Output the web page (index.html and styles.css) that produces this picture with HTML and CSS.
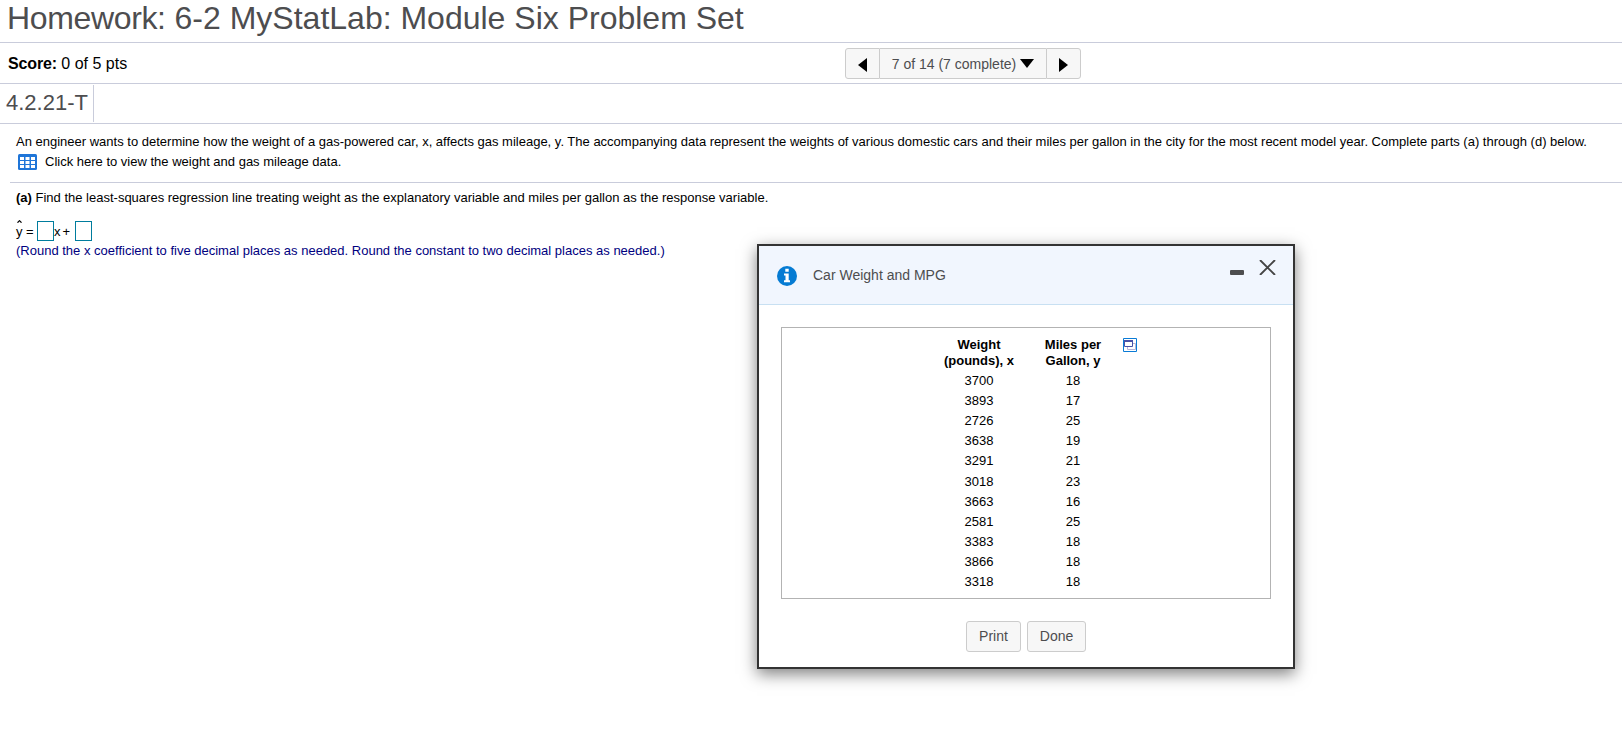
FILE: index.html
```html
<!DOCTYPE html>
<html lang="en">
  <head>
    <meta charset="UTF-8" />
    <meta name="viewport" content="width=device-width, initial-scale=1.0" />
    <title>Homework: 6-2 MyStatLab: Module Six Problem Set</title>
    <link rel="stylesheet" href="styles.css">
  </head>
  <body>
    <h1><span>Homework:</span> 6-2 MyStatLab: Module Six Problem Set</h1>
    <div class="score-bar">
      <div class="score"><b>Score:</b> 0 of 5 pts</div>
      <div class="pager">
        <button class="arrow">
          <svg width="9" height="14" viewBox="0 0 9 14"><path d="M9 0v14L0 7z" /></svg>
        </button>
        <button class="current">
          <span>7 of 14 (7 complete)</span>
          <svg width="14" height="9" viewBox="0 0 14 9"><path d="M0 0h14L7 9z" /></svg>
        </button>
        <button class="arrow">
          <svg width="9" height="14" viewBox="0 0 9 14"><path d="M0 0v14l9-7z" /></svg>
        </button>
      </div>
    </div>
    <div class="exercise-bar">
      <div class="exercise-id">4.2.21-T</div>
    </div>

    <div class="question">
      <p class="intro">An engineer wants to determine how the weight of a gas-powered car, x, affects gas mileage, y. The accompanying data represent the weights of various domestic cars and their miles per gallon in the city for the most recent model year. Complete parts (a) through (d) below.</p>
      <div class="data-link">
        <svg width="19" height="16" viewBox="0 0 19 16">
          <rect width="19" height="16" rx="1.5" fill="#1f75d8" />
          <path fill="#fff" d="M2 3h4v3H2zM7.500 3h4v3h-4zM13 3h4v3h-4zM2 7h4v3H2zM7.500 7h4v3h-4zM13 7h4v3h-4zM2 11h4v3H2zM7.500 11h4v3h-4zM13 11h4v3h-4z" />
        </svg>
        <span>Click here to view the weight and gas mileage data.</span>
      </div>
    </div>

    <div class="part">
      <p class="prompt"><b>(a)</b> Find the least-squares regression line treating weight as the explanatory variable and miles per gallon as the response variable.</p>
      <div class="equation">
        <span class="y-hat">
          <svg width="5" height="3" viewBox="0 0 5 3"><path d="M.5 2.700L2.500.7l2 2" fill="none" stroke="#000" stroke-width="1.200" /></svg>
          <span>y</span>
        </span>
        <span class="equals">=</span>
        <span class="answer"></span>
        <span class="plus">x<i>+</i></span>
        <span class="answer"></span>
      </div>
      <p class="hint">(Round the x coefficient to five decimal places as needed. Round the constant to two decimal places as needed.)</p>
    </div>

    <div class="dialog">
      <div class="dialog-header">
        <svg class="info" width="20" height="20" viewBox="0 0 20 20">
          <circle cx="10" cy="10" r="10" fill="#057bd3" />
          <path fill="#fff" d="M8.300 2.800h3.400v3H8.300zM7 7.500h4.700v6.800H13v2H7v-2h1.500V9.500H7z" />
        </svg>
        <span class="dialog-title">Car Weight and MPG</span>
        <div class="dialog-controls">
          <svg width="14" height="5" viewBox="0 0 14 5"><rect width="14" height="5" rx="1" fill="#4d4d4f" /></svg>
          <svg width="17" height="15" viewBox="0 0 17 15"><path d="M1 0l15 15M16 0L1 15" stroke="#444" stroke-width="1.900" /></svg>
        </div>
      </div>
      <div class="data-box">
        <table>
          <thead>
            <tr><th>Weight<br>(pounds), x</th><th>Miles per<br>Gallon, y</th></tr>
          </thead>
          <tbody>
            <tr><td>3700</td><td>18</td></tr>
            <tr><td>3893</td><td>17</td></tr>
            <tr><td>2726</td><td>25</td></tr>
            <tr><td>3638</td><td>19</td></tr>
            <tr><td>3291</td><td>21</td></tr>
            <tr><td>3018</td><td>23</td></tr>
            <tr><td>3663</td><td>16</td></tr>
            <tr><td>2581</td><td>25</td></tr>
            <tr><td>3383</td><td>18</td></tr>
            <tr><td>3866</td><td>18</td></tr>
            <tr><td>3318</td><td>18</td></tr>
          </tbody>
        </table>
        <svg class="popout" width="14" height="14" viewBox="0 0 14 14">
          <path d="M.5.5h13v13H.5z" fill="#fff" stroke="#0a7bd6" />
          <path d="M10 5.500h2.500v6h-8V9" fill="none" stroke="#b9b5d8" />
          <path d="M1.500 2.500h8v6h-8z" fill="#fff" stroke="#4a52a8" />
          <path d="M1 2h9v2H1z" fill="#4a52a8" />
        </svg>
      </div>
      <div class="dialog-buttons">
        <button class="print">Print</button>
        <button class="done">Done</button>
      </div>
    </div>
  </body>
</html>
```

FILE: styles.css
```css
* {
  box-sizing: border-box;
}
body {
  margin: 0;
  height: 741px;
  overflow: hidden;
  position: relative;
  background-color: #fff;
  color: #000;
  font-family: "Liberation Sans", Arial, sans-serif;
  font-size: 13px;
}
svg {
  display: block;
  flex-shrink: 0;
}
p {
  margin: 0;
  white-space: nowrap;
}
button {
  padding: 0;
  border: 1px solid #ccc;
  background-color: #f7f7f7;
  color: #4d4d4f;
  font-family: inherit;
  font-size: 14px;
}
h1 {
  height: 43px;
  margin: 0;
  padding-left: 7px;
  border-bottom: 1px solid #c9ccdb;
  color: #4d4d4f;
  font-size: 32px;
  font-weight: normal;
  line-height: 36px;
}
h1 span {
  letter-spacing: -0.35px;
}
.score-bar {
  display: flex;
  height: 41px;
  border-bottom: 1px solid #c9ccdb;
}
.score {
  width: 845px;
  padding-left: 8px;
  font-size: 16px;
  line-height: 41px;
}
.score b {
  letter-spacing: -0.15px;
}
.pager {
  display: flex;
  width: 236px;
  height: 31px;
  margin-top: 5px;
}
.pager button {
  display: flex;
  align-items: center;
  justify-content: center;
}
.arrow {
  width: 35px;
  padding-top: 2px;
}
.arrow:first-child {
  border-radius: 3px 0 0 3px;
}
.arrow:last-child {
  border-radius: 0 3px 3px 0;
}
.pager .current {
  flex: 1;
  gap: 4px;
  border-left: 0;
  border-right: 0;
}
.exercise-bar {
  height: 40px;
  padding-top: 1px;
  border-bottom: 1px solid #c9ccdb;
}
.exercise-id {
  width: 94px;
  height: 37px;
  padding-left: 6px;
  border-right: 1px solid #c9ccdb;
  color: #4d4d4f;
  font-size: 22px;
  line-height: 35px;
}
.question {
  height: 59px;
  margin-left: 10px;
  padding: 10px 0 0 6px;
  border-bottom: 1px solid #c9ccdb;
}
.intro {
  line-height: 16px;
}
.data-link {
  display: flex;
  align-items: center;
  gap: 8px;
  height: 16px;
  margin: 4px 0 0 2px;
}
.data-link span {
  padding-bottom: 2px;
}
.part {
  padding: 7px 0 0 16px;
}
.prompt {
  line-height: 16px;
}
.equation {
  display: flex;
  height: 20px;
  margin-top: 15px;
  line-height: 21px;
}
.y-hat {
  display: flex;
  flex-direction: column;
  width: 10px;
}
.y-hat svg {
  margin: -1px 0 -2px 1px;
}
.equals {
  width: 11px;
}
.answer {
  width: 17px;
  height: 20px;
  border: 1px solid #007c9d;
}
.plus {
  width: 21px;
}
.plus i {
  margin-left: 2px;
  font-style: normal;
}
.hint {
  margin-top: 2px;
  color: #000080;
  line-height: 16px;
}

/* data popup, floats over the exercise */
.dialog {
  position: absolute;
  left: 757px;
  top: 244px;
  width: 538px;
  height: 425px;
  border: 2px solid #333;
  background-color: #fff;
  box-shadow: 0 5px 15px rgba(0, 0, 0, 0.5);
}
.dialog-header {
  display: flex;
  height: 59px;
  padding: 20px 17px 0 18px;
  border-bottom: 1px solid #c8e0f2;
  background-color: #f1f6fe;
}
.dialog-title {
  flex: 1;
  margin-left: 16px;
  color: #4d4d4f;
  font-size: 14px;
  line-height: 18px;
}
.dialog-controls {
  display: flex;
  align-items: flex-end;
  gap: 15px;
  height: 15px;
  margin-top: -6px;
}
.data-box {
  display: flex;
  justify-content: center;
  gap: 3px;
  width: 490px;
  height: 272px;
  margin: 22px 0 0 22px;
  padding-top: 8px;
  border: 1px solid #b3b3b3;
}
.data-box table {
  height: 256px;
  margin-left: 17px;
  border-collapse: collapse;
  text-align: center;
}
.data-box th {
  width: 94px;
  height: 35px;
  padding: 0 0 1px;
  line-height: 16px;
}
.data-box td {
  height: 20.100px;
  padding: 0;
  line-height: 16px;
}
.popout {
  margin-top: 2px;
}
.dialog-buttons {
  display: flex;
  gap: 6px;
  margin: 22px 0 0 207px;
}
.dialog-buttons button {
  height: 31px;
  padding-bottom: 2px;
  border-radius: 3px;
}
.print {
  width: 55px;
}
.done {
  width: 59px;
}
```
